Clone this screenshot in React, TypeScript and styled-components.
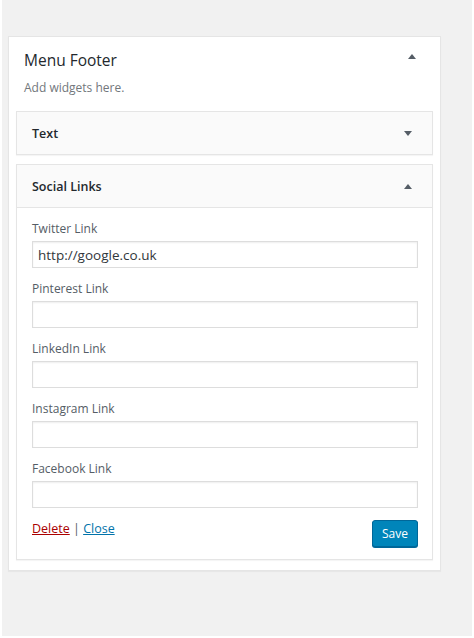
import React from 'react';
import styled, { createGlobalStyle } from 'styled-components';

const GlobalStyle = createGlobalStyle`
    html, body {
        margin: 0;
        padding: 0;
        background: #fff;
    }
    body {
        font-family: 'Open Sans', 'Noto Sans', sans-serif;
        color: #23282d;
    }
`;

// page canvas
const Page = styled.div`
    margin: 0 2px;
    min-height: 636px;
    background: #f1f1f1;
    padding: 36px 0 0 6px;
    box-sizing: border-box;
`;

// sidebar card
const Sidebar = styled.div`
    width: 433px;
    box-sizing: border-box;
    background: #fff;
    border: 1px solid #e5e5e5;
    box-shadow: 0 1px 1px rgba(0, 0, 0, 0.04);
    padding: 0 7px 10px;
`;

const SidebarHead = styled.div`
    display: flex;
    align-items: flex-start;
    justify-content: space-between;
    padding: 12px 8px 0 8px;
`;

const SidebarTitle = styled.h2`
    margin: 0;
    font-size: 15.5px;
    font-weight: 400;
    line-height: 22px;
    color: #23282d;
`;

const SidebarDesc = styled.p`
    margin: 8px 8px 14px;
    font-size: 12px;
    line-height: 18px;
    color: #72777c;
`;

const Arrow = styled.span<{ $down?: boolean; $top?: number }>`
    display: block;
    width: 0;
    height: 0;
    margin: ${(p) => p.$top ?? 5}px 9px 0 0;
    border-left: 4px solid transparent;
    border-right: 4px solid transparent;
    ${(p) => (p.$down ? 'border-top: 5px solid #555d66;' : 'border-bottom: 5px solid #555d66;')}
`;

const Widget = styled.div`
    background: #fff;
    border: 1px solid #e5e5e5;
    box-shadow: 0 1px 1px rgba(0, 0, 0, 0.04);
    margin-bottom: 9px;

    &:last-child {
        margin-bottom: 0;
    }
`;

const WidgetTop = styled.div<{ $open?: boolean }>`
    height: 42px;
    display: flex;
    align-items: center;
    justify-content: space-between;
    padding: 0 11px 0 15px;
    background: #fafafa;
    border-bottom: ${(p) => (p.$open ? '1px solid #e5e5e5' : 'none')};
`;

const WidgetTitle = styled.h3`
    margin: 0;
    font-size: 12.5px;
    font-weight: 600;
    color: #23282d;
`;

const WidgetBody = styled.div`
    padding: 11px 14px 12px 15px;
`;

const Field = styled.div`
    margin-bottom: 11px;
`;

const Label = styled.label`
    display: block;
    font-size: 12px;
    line-height: 20px;
    color: #555d66;
    margin-bottom: 2px;
`;

const Input = styled.input`
    display: block;
    width: 100%;
    height: 27px;
    box-sizing: border-box;
    border: 1px solid #ddd;
    box-shadow: inset 0 1px 2px rgba(0, 0, 0, 0.07);
    padding: 0 5px;
    font-family: inherit;
    font-size: 13.5px;
    color: #32373c;
    background: #fff;
    outline: none;
`;

const Actions = styled.div`
    display: flex;
    align-items: flex-start;
    justify-content: space-between;
    margin-top: 12px;
`;

const Links = styled.div`
    font-size: 12.5px;
    line-height: 17px;
    color: #555d66;
`;

const ActionLink = styled.a<{ $danger?: boolean }>`
    color: ${(p) => (p.$danger ? '#a00' : '#0073aa')};
    text-decoration: underline;
    cursor: pointer;
`;

const SaveButton = styled.button`
    height: 27px;
    padding: 0 9px;
    background: #0085ba;
    border: 1px solid #006799;
    border-radius: 3px;
    box-shadow: 0 1px 0 #006799;
    color: #fff;
    font-family: inherit;
    font-size: 12px;
    cursor: pointer;
`;

const fields = [
    { label: 'Twitter Link', value: 'http://google.co.uk' },
    { label: 'Pinterest Link', value: '' },
    { label: 'LinkedIn Link', value: '' },
    { label: 'Instagram Link', value: '' },
    { label: 'Facebook Link', value: '' },
];

export default function App() {
    return (
        <>
            <GlobalStyle />
            <Page>
                <Sidebar>
                    <SidebarHead>
                        <SidebarTitle>Menu Footer</SidebarTitle>
                        <Arrow $top={5} />
                    </SidebarHead>
                    <SidebarDesc>Add widgets here.</SidebarDesc>

                    <Widget>
                        <WidgetTop>
                            <WidgetTitle>Text</WidgetTitle>
                            <Arrow $down $top={0} />
                        </WidgetTop>
                    </Widget>

                    <Widget>
                        <WidgetTop $open>
                            <WidgetTitle>Social Links</WidgetTitle>
                            <Arrow $top={0} />
                        </WidgetTop>
                        <WidgetBody>
                            {fields.map((f) => (
                                <Field key={f.label}>
                                    <Label>{f.label}</Label>
                                    <Input type="text" defaultValue={f.value} />
                                </Field>
                            ))}
                            <Actions>
                                <Links>
                                    <ActionLink $danger>Delete</ActionLink> | <ActionLink>Close</ActionLink>
                                </Links>
                                <SaveButton>Save</SaveButton>
                            </Actions>
                        </WidgetBody>
                    </Widget>
                </Sidebar>
            </Page>
        </>
    );
}
